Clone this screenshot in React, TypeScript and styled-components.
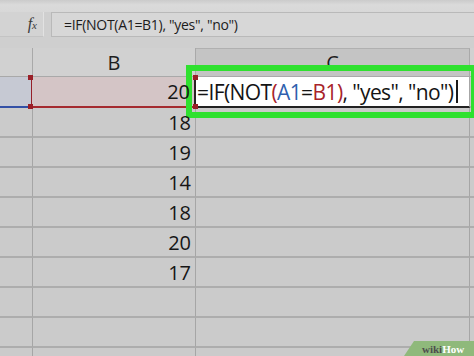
import styled, { createGlobalStyle } from "styled-components";

const GlobalStyle = createGlobalStyle`
  html, body {
    margin: 0;
    padding: 0;
    background: #cfcfcf;
  }
`;

type Variant = "refA" | "refB" | "edit" | "plain" | "edge";

const values = ["20", "18", "19", "14", "18", "20", "17", "", "", ""];

export default function App() {
  return (
    <>
      <GlobalStyle />
      <Page>
        <TopStrip />
        <FormulaBar>
          <NameBox>
            <Fx>
              f<small>x</small>
            </Fx>
          </NameBox>
          <FormulaInput>=IF(NOT(A1=B1), "yes", "no")</FormulaInput>
        </FormulaBar>

        <Sheet>
          <HeaderRow>
            <HeadCell />
            <HeadCell>B</HeadCell>
            <HeadCell $active>C</HeadCell>
            <HeadCell $edge />
          </HeaderRow>

          {values.map((v, i) =>
            i === 0 ? (
              <Row key={i} $first>
                <Cell $variant="refA" />
                <Cell $variant="refB">
                  <Handle style={{ left: -4, top: -2 }} />
                  <Handle style={{ left: -4, bottom: -3 }} />
                  <Handle style={{ right: -4, bottom: -3 }} />
                  <Handle style={{ right: -4, top: -2 }} />
                  <Num>{v}</Num>
                </Cell>
                <Cell $variant="edit">
                  <EditText>
                    =IF(NOT<Red>(</Red>
                    <Blue>A1</Blue>=<Red>B1</Red>
                    <Red>)</Red>, "yes", "no")
                  </EditText>
                  <Caret />
                </Cell>
                <Cell $variant="edge" />
              </Row>
            ) : (
              <Row key={i}>
                <Cell />
                <Cell>
                  <Num>{v}</Num>
                </Cell>
                <Cell />
                <Cell $variant="edge" />
              </Row>
            )
          )}
        </Sheet>

        <GreenBox />
        <Badge>
          wiki<strong>How</strong>
        </Badge>
      </Page>
    </>
  );
}

const Page = styled.div`
  position: relative;
  width: 474px;
  height: 356px;
  overflow: hidden;
  background: #cfcfcf;
  font-family: "Open Sans", "Liberation Sans", sans-serif;
  color: #161616;
`;

const TopStrip = styled.div`
  height: 12px;
  background: linear-gradient(#cbcbcb, #dadada 40%, #d8d8d8);
`;

const FormulaBar = styled.div`
  display: flex;
  gap: 7px;
  height: 25px;
  margin-bottom: 11px;
`;

const NameBox = styled.div`
  width: 44px;
  display: flex;
  align-items: center;
  justify-content: flex-end;
  padding-right: 6px;
  box-sizing: border-box;
  background: #d3d3d3;
  border-right: 1px solid #e2e2e2;
  border-bottom: 1px solid #c4c4c4;
`;

const Fx = styled.span`
  font-family: "Liberation Serif", serif;
  font-style: italic;
  font-size: 16px;
  color: #3a3a3a;

  small {
    font-size: 11px;
  }
`;

const FormulaInput = styled.div`
  flex: 1;
  display: flex;
  align-items: center;
  padding-left: 12px;
  background: #d7d7d7;
  border: 1px solid #b9b9b9;
  border-right: none;
  font-size: 14px;
  letter-spacing: -0.3px;
  color: #1c1c1c;
`;

const Sheet = styled.div`
  display: flex;
  flex-direction: column;
`;

const columns = "33px 163px 274px 1fr";

const HeaderRow = styled.div`
  display: grid;
  grid-template-columns: ${columns};
  height: 29px;
`;

const HeadCell = styled.div<{ $active?: boolean; $edge?: boolean }>`
  display: flex;
  align-items: center;
  justify-content: center;
  font-size: 20px;
  color: #1e1e1e;
  background: ${(p) => (p.$active ? "#c4c4c4" : "#d1d1d1")};
  border-right: ${(p) => (p.$edge ? "none" : "1px solid #a9a9a9")};
  border-bottom: 1px solid #a9a9a9;
  border-top: ${(p) => (p.$active ? "1px solid #b0b0b0" : "none")};
  box-sizing: border-box;
`;

const Row = styled.div<{ $first?: boolean }>`
  display: grid;
  grid-template-columns: ${columns};
  height: ${(p) => (p.$first ? "31px" : "30px")};
  flex-shrink: 0;
`;

const variantStyles: Record<Variant, string> = {
  plain: `
    background: #cbcbcb;
    border-right: 1px solid #a6a6a6;
    border-bottom: 2px solid #adadad;
  `,
  edge: `
    background: #cbcbcb;
    border-bottom: 2px solid #adadad;
  `,
  refA: `
    background: #c6c9d3;
    border-right: 2px solid #962028;
    border-bottom: 2px solid #3350a6;
  `,
  refB: `
    background: #d4c5c6;
    border-right: 2px solid #2b2222;
    border-bottom: 2px solid #a52a2f;
    margin-left: -1px;
  `,
  edit: `
    background: #ffffff;
    border-bottom: 2px solid #222;
    border-right: 1px solid #a6a6a6;
  `,
};

const Cell = styled.div<{ $variant?: Variant }>`
  position: relative;
  display: flex;
  align-items: center;
  box-sizing: border-box;
  ${(p) => variantStyles[p.$variant ?? "plain"]}
`;

const Num = styled.span`
  margin-left: auto;
  padding-right: 4px;
  font-size: 20px;
  position: relative;
  z-index: 2;
`;

const Handle = styled.span`
  position: absolute;
  width: 5px;
  height: 5px;
  background: #9a1f27;
  z-index: 3;
`;

const EditText = styled.span`
  padding-left: 1px;
  font-size: 21px;
  letter-spacing: -0.6px;
  white-space: pre;
  color: #141414;
`;

const Red = styled.span`
  color: #a8232b;
`;

const Blue = styled.span`
  color: #2f5fae;
`;

const Caret = styled.span`
  width: 1.5px;
  height: 23px;
  margin-left: 3px;
  background: #1a1a1a;
`;

const GreenBox = styled.div`
  position: absolute;
  left: 186px;
  top: 65px;
  width: 292px;
  height: 53px;
  box-sizing: border-box;
  border: 6px solid #2fe12f;
  border-right-width: 7px;
  z-index: 1;
  pointer-events: none;
`;

const Badge = styled.div`
  position: absolute;
  right: 0;
  bottom: 0;
  width: 70px;
  height: 15px;
  padding-left: 18px;
  box-sizing: border-box;
  display: flex;
  align-items: center;
  background: #8fb97b;
  clip-path: polygon(10px 0, 100% 0, 100% 100%, 0 100%);
  font-family: "Liberation Serif", serif;
  font-weight: bold;
  font-size: 11px;
  color: #4d4d4d;

  strong {
    color: #ffffff;
  }
`;
